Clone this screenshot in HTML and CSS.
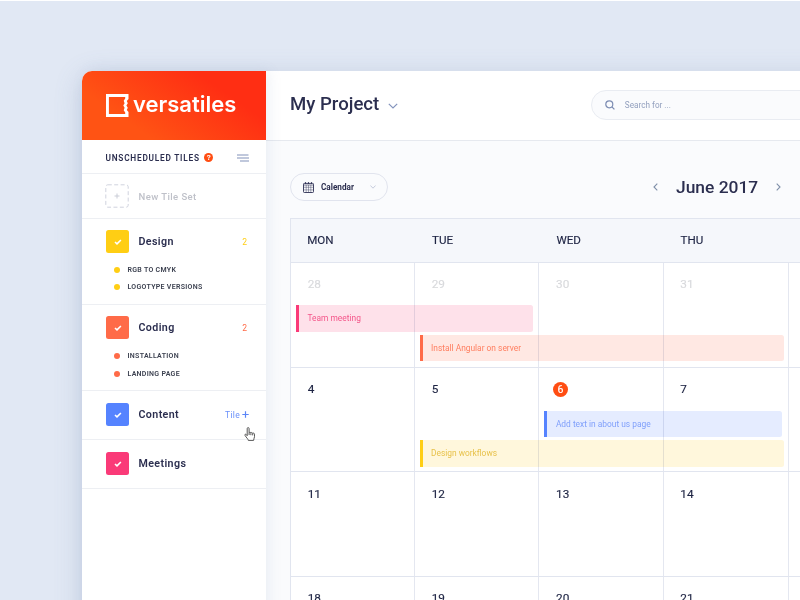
FILE: index.html
```html
<!DOCTYPE html>
<html lang="en">
<head>
<meta charset="utf-8">
<title>Versatiles</title>
<link rel="stylesheet" href="styles.css">
</head>
<body>
<div class="window">
  <aside class="sidebar">
    <div class="brand">
      <svg class="brand-mark" viewBox="0 0 23 23" width="23" height="23"><path fill="#fff" fill-rule="evenodd" d="M0 0H22.500V5L20.800 7l1 2.300-1.400 2.200 1.400 2.200-1 2.300 1.700 2v5H0zM2.900 2.900v17.200h16.300v-1.500l-1.500-2.300.9-2.500-1.300-2.300 1.300-2.300-.9-2.500 1.500-2.300V2.900z"/></svg>
      <span class="brand-name">versatiles</span>
    </div>
    <div class="side-head">
      <span class="side-title">UNSCHEDULED TILES</span>
      <span class="help">?</span>
      <svg class="lines" viewBox="0 0 12 8" width="12" height="8"><path d="M0 1h11.500M0 4h12M3 7h9" stroke="#8292ba" stroke-width="1.100" fill="none"/></svg>
    </div>
    <div class="new-set">
      <svg class="new-box" viewBox="0 0 24 24" width="24" height="24"><rect x=".8" y=".8" width="22.400" height="22.400" rx="2" fill="none" stroke="#d0d3de" stroke-dasharray="4 2.400"/><path d="M12 9.500v5M9.500 12h5" stroke="#c9ccd6"/></svg>
      <span>New Tile Set</span>
    </div>
    <section class="set design">
      <div class="set-row"><span class="check"><svg viewBox="0 0 8 6" width="8" height="6"><path d="M1 3l2 1.900L6.900 1" /></svg></span><h3>Design</h3><span class="count">2</span></div>
      <ul><li>RGB TO CMYK</li><li>LOGOTYPE VERSIONS</li></ul>
    </section>
    <section class="set coding">
      <div class="set-row"><span class="check"><svg viewBox="0 0 8 6" width="8" height="6"><path d="M1 3l2 1.900L6.900 1" /></svg></span><h3>Coding</h3><span class="count">2</span></div>
      <ul><li>INSTALLATION</li><li>LANDING PAGE</li></ul>
    </section>
    <section class="set content">
      <div class="set-row"><span class="check"><svg viewBox="0 0 8 6" width="8" height="6"><path d="M1 3l2 1.900L6.900 1" /></svg></span><h3>Content</h3><span class="add">Tile <svg viewBox="0 0 7 7" width="7" height="7"><path d="M3.500 .3v6.400M.3 3.500h6.400" stroke="#5b85f7" stroke-width="1.200"/></svg></span></div>
      <svg class="cursor" viewBox="0 0 12 14" width="12" height="14"><path d="M3.200 8.700V1.600c0-1.400 1.900-1.400 1.900 0v4.200c.2-.8 1.700-.7 1.800.2.300-.7 1.700-.5 1.800.4.500-.6 1.800-.2 1.800.8v2.500c0 1.300-.9 2-.9 3.700H4.300c0-1.300-1.800-2.500-3.300-5-.6-1.100.8-1.600 1.400-.7zM5.100 6v2M6.900 6.200v2M8.700 6.600v1.800" fill="#fff" stroke="#444" stroke-width=".9" stroke-linejoin="round"/></svg>
    </section>
    <section class="set meetings">
      <div class="set-row"><span class="check"><svg viewBox="0 0 8 6" width="8" height="6"><path d="M1 3l2 1.900L6.900 1" /></svg></span><h3>Meetings</h3></div>
    </section>
  </aside>
  <main class="main">
    <header class="topbar">
      <h1>My Project</h1>
      <svg class="chev" viewBox="0 0 10 6" width="10" height="6"><path d="M.8 .8L5 5 9.200 .8" fill="none" stroke="#8494bd" stroke-width="1.200"/></svg>
      <div class="search">
        <svg viewBox="0 0 10 10" width="10" height="10"><circle cx="4.300" cy="4.300" r="3.500" fill="none" stroke="#7d8db3" stroke-width="1.200"/><path d="M6.900 6.900l2.500 2.500" stroke="#7d8db3" stroke-width="1.300"/></svg>
        <span>Search for ...</span>
      </div>
    </header>
    <div class="toolbar">
      <div class="view">
        <svg viewBox="0 0 11 11" width="11" height="11"><rect x=".5" y="1.400" width="10" height="9.100" rx=".8" fill="none" stroke="#2b2e52" stroke-width=".9"/><path d="M1 3h9" stroke="#2b2e52" stroke-width=".6"/><path d="M2.500 0v2M5.500 0v2M8.500 0v2" stroke="#2b2e52" stroke-width=".8"/><path d="M1 5.300h9M1 7.900h9M3.200 3v7M5.500 3v7M7.800 3v7" stroke="#2b2e52" stroke-width=".4"/></svg>
        <span>Calendar</span>
        <svg class="view-chev" viewBox="0 0 6 4" width="6" height="4"><path d="M.4 .5L3 3.200 5.600 .5" fill="none" stroke="#c0c6d8" stroke-width=".9"/></svg>
      </div>
      <div class="month">
        <svg viewBox="0 0 5 8" width="5" height="8"><path d="M4.300 .7L1 4l3.300 3.300" fill="none" stroke="#7f8fa9" stroke-width="1.100"/></svg>
        <h2>June 2017</h2>
        <svg viewBox="0 0 5 8" width="5" height="8"><path d="M.7 .7L4 4 .7 7.300" fill="none" stroke="#7f8fa9" stroke-width="1.100"/></svg>
      </div>
    </div>
    <div class="calendar">
      <div class="days"><span>MON</span><span>TUE</span><span>WED</span><span>THU</span><span></span></div>
      <div class="week past">
        <div class="cell c1">28</div><div class="cell c2">29</div><div class="cell c3">30</div><div class="cell c4">31</div><div class="cell c5"></div>
        <div class="event team">Team meeting</div>
        <div class="event install">Install Angular on server</div>
      </div>
      <div class="week current">
        <div class="cell c1">4</div><div class="cell c2">5</div><div class="cell c3"><span class="today">6</span></div><div class="cell c4">7</div><div class="cell c5"></div>
        <div class="event text">Add text in about us page</div>
        <div class="event flows">Design workflows</div>
      </div>
      <div class="week">
        <div class="cell c1">11</div><div class="cell c2">12</div><div class="cell c3">13</div><div class="cell c4">14</div><div class="cell c5"></div>
      </div>
      <div class="week last">
        <div class="cell c1">18</div><div class="cell c2">19</div><div class="cell c3">20</div><div class="cell c4">21</div><div class="cell c5"></div>
      </div>
    </div>
  </main>
</div>
</body>
</html>
```
FILE: styles.css
```css
* { box-sizing: border-box; }
body {
  margin: 0;
  height: 600px;
  overflow: hidden;
  padding: 70px 0 0 82px;
  border-top: 1px solid #fff;
  background: #e1e8f4;
  font-family: Roboto, "Liberation Sans", sans-serif;
  color: #2b2e4f;
}
h1, h2, h3, ul { margin: 0; padding: 0; font-weight: 500; }
svg { flex: none; display: block; }
.window {
  display: flex;
  width: 900px;
  height: 640px;
  border-radius: 10px 0 0 0;
  background: #fafbfd;
  box-shadow: 0 6px 28px rgba(96, 118, 165, .24);
}
.sidebar {
  position: relative;
  z-index: 1;
  flex: none;
  width: 184px;
  background: #fff;
  border-radius: 10px 0 0 0;
  box-shadow: 3px 0 14px rgba(90, 115, 165, .1);
}
.brand {
  display: flex;
  align-items: center;
  height: 69px;
  padding-left: 23.500px;
  border-radius: 10px 0 0 0;
  background: linear-gradient(35deg, #ff5314 25%, #ff2e13 75%);
}
.brand-mark { margin-top: -1px; }
.brand-name {
  margin: -3px 0 0 4.500px;
  color: #fff;
  font: 600 22px/26px Inter, sans-serif;
  letter-spacing: 0;
}
.side-head {
  display: flex;
  align-items: center;
  height: 34px;
  padding: 2px 17px 0 23.500px;
  border-bottom: 1px solid #edeff3;
}
.side-title { font-size: 8.300px; font-weight: 600; letter-spacing: .76px; white-space: nowrap; }
.help {
  width: 9px;
  height: 9px;
  margin-left: 4.500px;
  border-radius: 50%;
  background: #ff4d12;
  color: #fff;
  font-size: 8px;
  font-weight: 700;
  line-height: 9.500px;
  text-align: center;
}
.lines { margin-left: auto; }
.new-set {
  display: flex;
  align-items: center;
  gap: 9.500px;
  height: 45px;
  padding-left: 23px;
  border-bottom: 1px solid #edeff3;
  color: #bfc1c9;
  font-size: 9.500px;
  font-weight: 500;
  letter-spacing: .42px;
}
.set { position: relative; height: 86px; padding: 11px 17px 0 24px; border-bottom: 1px solid #edeff3; }
.set-row { display: flex; align-items: center; height: 23px; }
.check {
  display: flex;
  align-items: center;
  justify-content: center;
  width: 23px;
  height: 23px;
  border-radius: 2.500px;
  background: var(--tone);
}
.check path { fill: none; stroke: #fff; stroke-width: 1.600; }
.set h3 { margin-left: 9.500px; font-size: 10.700px; font-weight: 600; letter-spacing: .38px; }
.count { margin: 1px 2px 0 auto; color: var(--tone); font-size: 8.500px; }
.set ul { padding: 8px 0 0 7.500px; list-style: none; }
.set li {
  display: flex;
  align-items: center;
  gap: 8px;
  height: 17.500px;
  color: #3c4150;
  font-size: 7px;
  font-weight: 600;
  letter-spacing: .3px;
}
.set li::before { content: ""; width: 6px; height: 6px; border-radius: 50%; background: var(--tone); }
.coding li { height: 18px; }
.coding ul { padding-top: 7.500px; }
.design { --tone: #ffce14; }
.coding { --tone: #ff6b48; }
.content { --tone: #5583ff; height: 49px; padding-top: 12px; }
.meetings { --tone: #fa3a78; height: 49px; padding-top: 12px; }
.add { display: flex; align-items: center; gap: 2px; margin-left: auto; color: #6a90fa; font-size: 8.500px; letter-spacing: .3px; }
.cursor { position: absolute; left: 162px; top: 36px; z-index: 2; }

.main { flex: 1; min-width: 0; }
.topbar {
  display: flex;
  align-items: center;
  height: 70px;
  padding: 0 0 0 24px;
  border-bottom: 1px solid #e6e9ef;
  background: #fff;
}
.topbar h1 { margin-top: -3px; font-size: 18.600px; line-height: 24px; white-space: nowrap; }
.chev { margin: 0 0 0 9px; }
.search {
  display: flex;
  align-items: center;
  gap: 10px;
  width: 400px;
  height: 30px;
  margin: -1px 0 0 192.600px;
  padding-left: 13px;
  border: 1px solid #e9ecf2;
  border-radius: 15px;
  background: #fafbfd;
  color: #93a0be;
  font-size: 8.200px;
  flex: none;
}
.toolbar { display: flex; align-items: center; height: 77px; padding: 15px 0 0 24px; }
.view {
  display: flex;
  align-items: center;
  width: 98px;
  height: 28px;
  padding: 0 11px 0 12px;
  border: 1px solid #e1e4ee;
  border-radius: 14px;
  font-size: 8.200px;
  font-weight: 700;
}
.view span { margin-left: 7px; }
.view-chev { margin-left: auto; }
.month { display: flex; align-items: center; margin: -1px 0 0 265px; }
.month h2 { margin: 0 18px; font-size: 17.400px; line-height: 22px; white-space: nowrap; }
.calendar {
  width: 700px;
  margin: 0 0 0 24px;
  border-top: 1px solid #e1e5ef;
  border-left: 1px solid #e1e5ef;
  background: #fff;
}
.days, .week { display: grid; grid-template-columns: 124px 124.400px 124.200px 125px 202px; }
.days {
  height: 44px;
  align-items: center;
  padding-bottom: 1px;
  border-bottom: 1px solid #e1e5ef;
  background: #f5f7fb;
  color: #1f2544;
  font-size: 11.600px;
}
.days span { padding-left: 17px; -webkit-text-stroke: .15px; }
.days span:first-child { padding-left: 16.200px; }
.week {
  grid-template-rows: 42.400px 26.500px 3px 26.500px 1fr;
  height: 104.600px;
  border-bottom: 1px solid #e1e5ef;
}
.cell {
  grid-row: 1 / -1;
  padding: 14px 0 0 16.700px;
  border-right: 1px solid #e4e7f0;
  color: #1f2544;
  font-size: 11.800px;
  line-height: 16px;
  -webkit-text-stroke: .15px;
}
.current { grid-template-rows: 43px 26.500px 3px 26.500px 1fr; }
.past .cell, .current .cell, .last .cell { padding-top: 13px; }
.c1 { grid-column: 1; }
.c2 { grid-column: 2; }
.c3 { grid-column: 3; }
.c4 { grid-column: 4; }
.c5 { grid-column: 5; }
.past .cell { color: #d9dadd; }
.today {
  display: block;
  width: 15px;
  height: 15px;
  margin: 1px 0 0 -3.200px;
  border-radius: 50%;
  background: #ff4d12;
  color: #fff;
  font-size: 10.500px;
  line-height: 15px;
  text-align: center;
}
.event {
  padding-left: 8.500px;
  border-left: 3px solid var(--tone);
  border-radius: 0 2.500px 2.500px 0;
  font-size: 8.400px;
  line-height: 27px;
  mix-blend-mode: multiply;
}
.team { --tone: #fa3a78; grid-area: 2 / 1 / 3 / 3; margin: 0 6.500px 0 5px; background: #fee1ea; color: #f4568a; }
.install { --tone: #ff6b48; grid-area: 4 / 2 / 5 / 5; margin: 0 4.500px 0 4.500px; background: #ffe8e3; color: #ff7f60; }
.text { --tone: #5583ff; grid-area: 2 / 3 / 3 / 5; margin: 0 7px 0 5px; background: #e5ecff; color: #7f9ffb; }
.flows { --tone: #ffce14; grid-area: 4 / 2 / 5 / 5; margin: 0 4.500px 0 4.500px; background: #fff7dc; color: #e8c24b; }
```
